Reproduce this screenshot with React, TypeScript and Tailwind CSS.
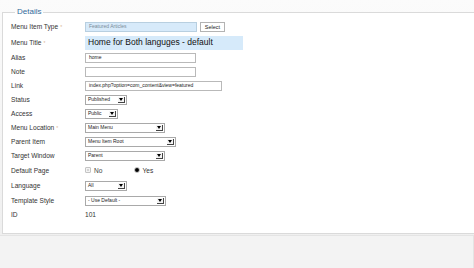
import React from 'react';

const font = { fontFamily: '"Liberation Sans", Arial, sans-serif' };

const Label: React.FC<{ text: string; required?: boolean }> = ({ text, required }) => (
  <div className="w-[74px] shrink-0 text-[6.6px] text-[#333]">
    {text}
    {required && <span className="ml-[2px] text-[5px] text-[#d9b58f]">*</span>}
  </div>
);

const TextInput: React.FC<{ value?: string; className: string }> = ({ value, className }) => (
  <div className={`flex h-[10px] items-center border border-[#b9b9b9] bg-white pl-[3px] text-[5px] text-[#222] ${className}`}>
    {value}
  </div>
);

const Select: React.FC<{ value: string; className: string }> = ({ value, className }) => (
  <div className={`flex h-[10px] items-stretch border border-[#a9a9a9] bg-white ${className}`}>
    <span className="flex flex-1 items-center pl-[2px] text-[5px] text-[#222]">{value}</span>
    <span className="my-[1px] mr-[1px] flex w-[7px] items-center justify-center border-r border-b border-[#444] bg-[#f4f4f4]">
      <span className="h-0 w-0 border-x-[2px] border-t-[3px] border-x-transparent border-t-black" />
    </span>
  </div>
);

const Row: React.FC<{ h: string; children: React.ReactNode }> = ({ h, children }) => (
  <div className={`flex items-center ${h}`}>{children}</div>
);

export default function App() {
  return (
    <div className="h-[268px] w-[474px] overflow-hidden bg-gradient-to-b from-[#fbfbfb] to-[#eeeeee]" style={font}>
      <div className="pt-[7px]">
        <fieldset className="ml-[2px] border border-r-0 border-[#dadada] bg-white pb-[11px] pl-[8px]">
          <legend className="ml-[4px] px-[2px] text-[8px] leading-[10px] text-[#336b9b]">Details</legend>
          <div className="pt-[3px]">
            <Row h="h-[14px]">
              <Label text="Menu Item Type" required />
              <div className="flex h-[10px] w-[112px] items-center border border-[#b8cfe0] bg-[#d7eafa] pl-[3px] text-[5px] text-[#7a8a99]">
                Featured Articles
              </div>
              <div className="ml-[3px] flex h-[10px] w-[25px] items-center justify-center border border-[#b3b3b3] bg-white text-[5.5px] text-[#222]">
                Select
              </div>
            </Row>
            <Row h="h-[17px]">
              <Label text="Menu Title" required />
              <div className="flex h-[14px] w-[158px] items-center bg-[#d6eafa] pl-[3px] text-[8.5px] text-[#111]">
                Home for Both languges - default
              </div>
            </Row>
            <Row h="h-[14px]">
              <Label text="Alias" />
              <TextInput value="home" className="w-[111px]" />
            </Row>
            <Row h="h-[14px]">
              <Label text="Note" />
              <TextInput className="w-[111px]" />
            </Row>
            <Row h="h-[14px]">
              <Label text="Link" />
              <TextInput value="index.php?option=com_content&view=featured" className="w-[137px] text-[4.6px]" />
            </Row>
            <Row h="h-[14px]">
              <Label text="Status" />
              <Select value="Published" className="w-[42px]" />
            </Row>
            <Row h="h-[14px]">
              <Label text="Access" />
              <Select value="Public" className="w-[33px]" />
            </Row>
            <Row h="h-[14px]">
              <Label text="Menu Location" required />
              <Select value="Main Menu" className="w-[80px]" />
            </Row>
            <Row h="h-[14px]">
              <Label text="Parent Item" />
              <Select value="Menu Item Root" className="w-[91px]" />
            </Row>
            <Row h="h-[14px]">
              <Label text="Target Window" />
              <Select value="Parent" className="w-[80px]" />
            </Row>
            <Row h="h-[15px]">
              <Label text="Default Page" />
              <div className="flex items-center">
                <span className="flex h-[6px] w-[6px] items-center justify-center rounded-[1px] border border-[#c4c4c4] bg-[#f3f3f3]">
                  <span className="h-[2px] w-[2px] bg-[#d4d4d4]" />
                </span>
                <span className="ml-[3px] text-[6.6px] text-[#444]">No</span>
              </div>
              <div className="ml-[32px] flex items-center">
                <span className="flex h-[6px] w-[6px] items-center justify-center rounded-full border border-[#bbb] bg-white">
                  <span className="h-[4px] w-[4px] rounded-full bg-black" />
                </span>
                <span className="ml-[2px] text-[6.6px] text-[#333]">Yes</span>
              </div>
            </Row>
            <Row h="h-[15px]">
              <Label text="Language" />
              <Select value="All" className="w-[42px]" />
            </Row>
            <Row h="h-[15px]">
              <Label text="Template Style" />
              <Select value="- Use Default -" className="w-[81px]" />
            </Row>
            <Row h="h-[14px]">
              <Label text="ID" />
              <span className="text-[6.6px] text-[#333]">101</span>
            </Row>
          </div>
        </fieldset>
        <div className="mt-[1px] h-[40px] border-t border-r border-[#e4e4e4] bg-[#f3f3f3]" />
      </div>
    </div>
  );
}
